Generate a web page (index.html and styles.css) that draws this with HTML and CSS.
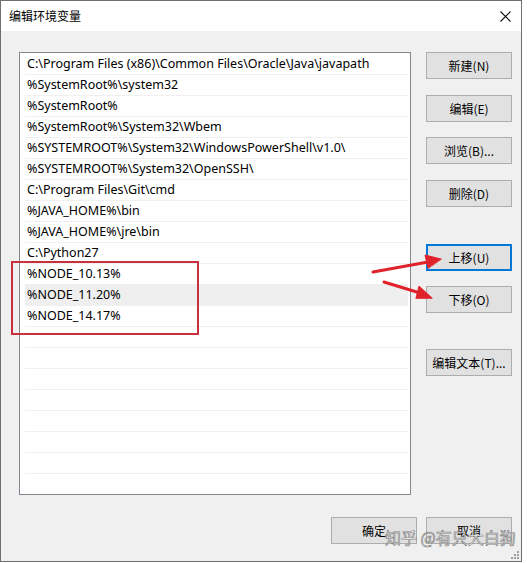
FILE: index.html
```html
<!DOCTYPE html>
<html>
<head>
<meta charset="utf-8">
<link rel="stylesheet" href="styles.css">
</head>
<body>
<div class="window">
  <div class="titlebar">
    <span class="title">编辑环境变量</span>
    <svg class="close" width="11" height="11" viewBox="0 0 11 11"><path d="M0.5 0.5L10.5 10.5M10.5 0.5L0.5 10.5" stroke="#111" stroke-width="1.1" fill="none"/></svg>
  </div>
  <div class="content">
    <div class="main">
      <div class="listbox">
        <div class="row">C:\Program Files (x86)\Common Files\Oracle\Java\javapath</div>
        <div class="row">%SystemRoot%\system32</div>
        <div class="row">%SystemRoot%</div>
        <div class="row">%SystemRoot%\System32\Wbem</div>
        <div class="row">%SYSTEMROOT%\System32\WindowsPowerShell\v1.0\</div>
        <div class="row">%SYSTEMROOT%\System32\OpenSSH\</div>
        <div class="row">C:\Program Files\Git\cmd</div>
        <div class="row">%JAVA_HOME%\bin</div>
        <div class="row">%JAVA_HOME%\jre\bin</div>
        <div class="row">C:\Python27</div>
        <div class="row">%NODE_10.13%</div>
        <div class="row hover">%NODE_11.20%</div>
        <div class="row">%NODE_14.17%</div>
        <div class="row"></div><div class="row"></div><div class="row"></div><div class="row"></div>
        <div class="row"></div><div class="row"></div><div class="row"></div>
      </div>
      <div class="side">
        <button class="btn b1">新建(N)</button>
        <button class="btn b2">编辑(E)</button>
        <button class="btn b3">浏览(B)...</button>
        <button class="btn b4">删除(D)</button>
        <button class="btn default b5">上移(U)</button>
        <button class="btn b6">下移(O)</button>
        <button class="btn b7">编辑文本(T)...</button>
      </div>
    </div>
    <div class="footer">
      <button class="btn">确定</button>
      <button class="btn">取消</button>
    </div>
  </div>
  <div class="redbox"></div>
  <svg class="arrows" width="527" height="563" viewBox="0 0 527 563">
    <g stroke="#e0232b" stroke-width="3" stroke-linecap="round" fill="#e0232b">
      <line x1="373" y1="272" x2="428" y2="262"/>
      <polygon points="441,259 425,255 428,268" stroke-width="1"/>
      <line x1="384" y1="282" x2="420" y2="293"/>
      <polygon points="432,298 419,286 416,298" stroke-width="1"/>
    </g>
  </svg>
  <div class="watermark">知乎 @有只大白狗</div>
  <svg class="grip" width="8" height="8" viewBox="0 0 8 8"><g fill="#a0a0a0"><rect x="6" y="0" width="2" height="2"/><rect x="3" y="3" width="2" height="2"/><rect x="6" y="3" width="2" height="2"/><rect x="0" y="6" width="2" height="2"/><rect x="3" y="6" width="2" height="2"/><rect x="6" y="6" width="2" height="2"/></g></svg>
</div>
</body>
</html>
```
FILE: styles.css
```css
html, body {
  margin: 0;
  padding: 0;
  background: #ffffff;
}
body {
  font-family: "Noto Sans CJK SC", "Noto Sans", sans-serif;
  font-size: 12px;
  color: #000;
}
.window {
  position: relative;
  width: 520px;
  height: 560px;
  border: 1px solid #6f6f6f;
  background: #f0f0f0;
  overflow: hidden;
}
.titlebar {
  height: 30px;
  background: #ffffff;
  display: flex;
  align-items: center;
  justify-content: space-between;
  padding: 0 8px 0 8px;
}
.title {
  font-size: 12px;
  color: #000;
  margin-top: -1px;
}
.close {
  margin-right: 2px;
}
.content {
  padding: 21px 0 0 18px;
}
.main {
  display: flex;
  align-items: flex-start;
}
.listbox {
  width: 383px;
  height: 440px;
  border: 1px solid #828790;
  background: #fff;
  padding: 1px 2px 0 5px;
  box-sizing: content-box;
  overflow: hidden;
}
.row {
  height: 20px;
  line-height: 20px;
  border-bottom: 1px solid #f0f0f0;
  padding-left: 2px;
  font-family: "Noto Sans", "Noto Sans CJK SC", sans-serif;
  font-size: 12.5px;
  white-space: nowrap;
  color: #000;
}
.row.hover {
  background: #efefef;
}
.side {
  display: flex;
  flex-direction: column;
  margin-left: 15px;
  margin-top: 0;
}
.btn {
  width: 86px;
  height: 27px;
  background: #e1e1e1;
  border: 1px solid #adadad;
  font-family: "Noto Sans CJK SC", "Noto Sans", sans-serif;
  font-size: 12px;
  color: #000;
  padding: 0;
  margin: 0;
  box-sizing: border-box;
}
.btn.default {
  border: 2px solid #0078d7;
}
.b1 { margin-bottom: 16px; }
.b2 { margin-bottom: 15px; }
.b3 { margin-bottom: 16px; }
.b4 { margin-bottom: 37px; }
.b5 { margin-bottom: 15px; }
.b6 { margin-bottom: 36px; }
.footer {
  display: flex;
  justify-content: flex-end;
  gap: 9px;
  padding-right: 9px;
  margin-top: 22px;
}
.redbox {
  position: absolute;
  left: 10px;
  top: 260px;
  width: 184px;
  height: 70px;
  border: 2px solid #c8303c;
}
.arrows {
  position: absolute;
  left: -1px;
  top: -1px;
}
.watermark {
  position: absolute;
  left: 384px;
  top: 524px;
  font-size: 16px;
  color: rgba(255,255,255,0.8);
  -webkit-text-stroke: 0.7px rgba(110,110,110,0.85);
  white-space: nowrap;
}
.grip {
  position: absolute;
  right: 2px;
  bottom: 2px;
}
```
